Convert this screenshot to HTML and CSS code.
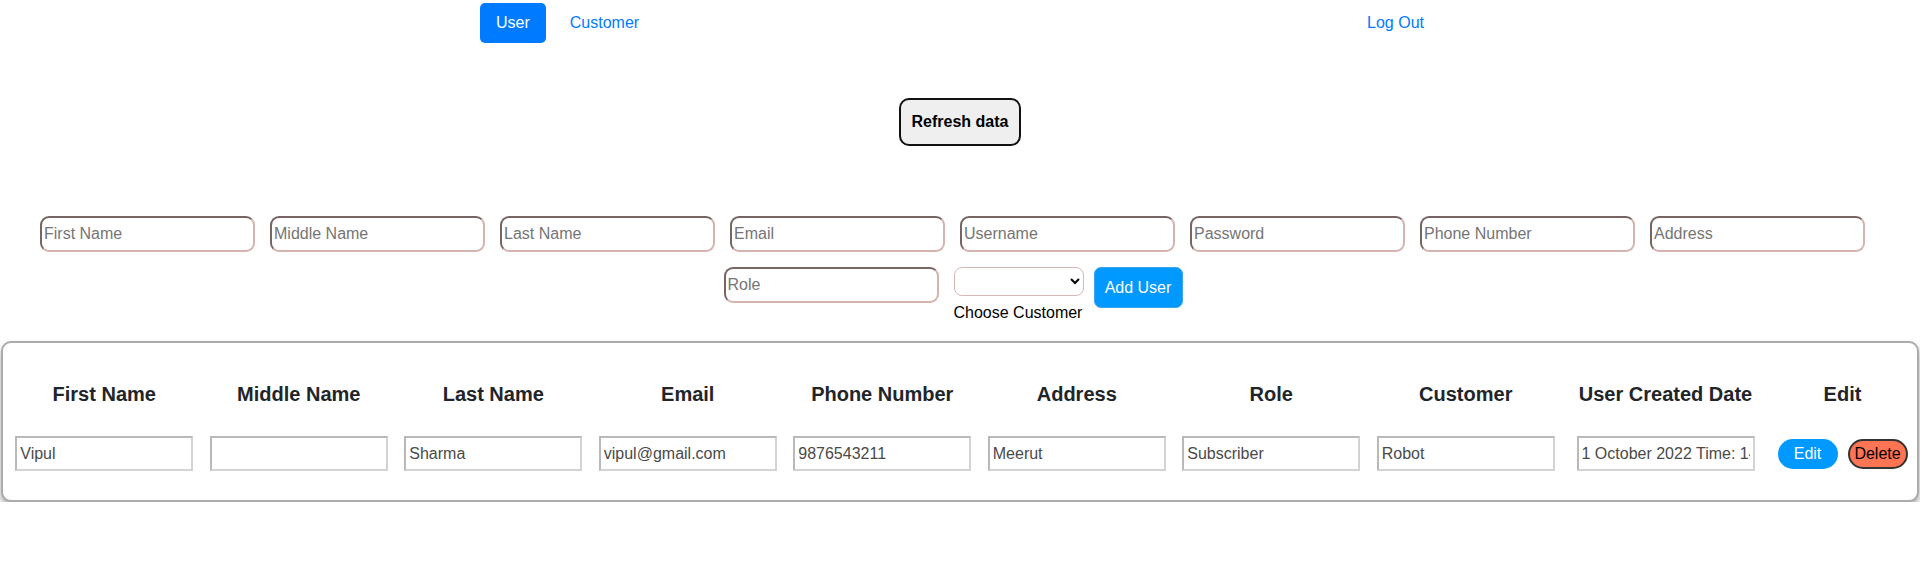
FILE: index.html
```html
<!DOCTYPE html>
<html lang="en">
<head>
<meta charset="utf-8">
<title>Users</title>
<link rel="stylesheet" href="styles.css">
</head>
<body>
<nav class="nav">
  <div class="nav-left">
    <a class="nav-link active" href="#">User</a>
    <a class="nav-link" href="#">Customer</a>
  </div>
  <a class="nav-link" href="#">Log Out</a>
</nav>

<div class="refresh-wrap">
  <button class="refresh">Refresh data</button>
</div>

<form class="user-form">
  <input class="field" placeholder="First Name">
  <input class="field" placeholder="Middle Name">
  <input class="field" placeholder="Last Name">
  <input class="field" placeholder="Email">
  <input class="field" placeholder="Username">
  <input class="field" placeholder="Password">
  <input class="field" placeholder="Phone Number">
  <input class="field" placeholder="Address">
  <input class="field" placeholder="Role">
  <div class="select-group">
    <select class="customer-select"><option></option></select>
    <label class="select-label">Choose Customer</label>
  </div>
  <button type="button" class="add-btn">Add User</button>
</form>

<div class="card">
  <table class="users">
    <colgroup>
      <col class="c-std"><col class="c-std"><col class="c-std"><col class="c-std">
      <col class="c-std"><col class="c-std"><col class="c-std"><col class="c-std">
      <col class="c-date"><col class="c-edit">
    </colgroup>
    <thead>
      <tr>
        <th>First Name</th>
        <th>Middle Name</th>
        <th>Last Name</th>
        <th>Email</th>
        <th>Phone Number</th>
        <th>Address</th>
        <th>Role</th>
        <th>Customer</th>
        <th>User Created Date</th>
        <th>Edit</th>
      </tr>
    </thead>
    <tbody>
      <tr>
        <td><input class="cell-input" value="Vipul" readonly></td>
        <td><input class="cell-input" value="" readonly></td>
        <td><input class="cell-input" value="Sharma" readonly></td>
        <td><input class="cell-input" value="vipul@gmail.com" readonly></td>
        <td><input class="cell-input" value="9876543211" readonly></td>
        <td><input class="cell-input" value="Meerut" readonly></td>
        <td><input class="cell-input" value="Subscriber" readonly></td>
        <td><input class="cell-input" value="Robot" readonly></td>
        <td><input class="cell-input" value="1 October 2022 Time: 14:35:12" readonly></td>
        <td>
          <div class="actions">
            <button class="edit-btn">Edit</button>
            <button class="delete-btn">Delete</button>
          </div>
        </td>
      </tr>
    </tbody>
  </table>
</div>
</body>
</html>
```

FILE: styles.css
```css
* {
  box-sizing: border-box;
}

body {
  margin: 0;
  font-family: "Liberation Sans", Arial, sans-serif;
  font-size: 16px;
  color: #212529;
  background: #fff;
}

/* Navigation */
.nav {
  width: 960px;
  margin: 0 auto;
  padding-top: 3px;
  display: flex;
  justify-content: space-between;
  align-items: flex-start;
}

.nav-left {
  display: flex;
}

.nav-link {
  display: block;
  padding: 8px 16px;
  line-height: 24px;
  font-size: 16px;
  color: #007bff;
  text-decoration: none;
  border-radius: 5px;
}

.nav-left .nav-link {
  margin-right: 8px;
}

.nav-link.active {
  background: #007bff;
  color: #fff;
}

/* Refresh */
.refresh-wrap {
  display: flex;
  justify-content: center;
  margin-top: 55px;
}

.refresh {
  font-family: "Liberation Sans", Arial, sans-serif;
  font-weight: bold;
  font-size: 16px;
  line-height: 18px;
  height: 48px;
  padding: 0 11px;
  background: #efefef;
  color: #000;
  border: 2px solid #111;
  border-radius: 10px;
}

/* Form */
.user-form {
  margin-top: 70px;
  display: flex;
  flex-wrap: wrap;
  justify-content: center;
  align-items: flex-start;
  row-gap: 15px;
}

.field {
  width: 215px;
  height: 36px;
  margin-right: 15px;
  padding: 0 2px;
  font-family: "Liberation Sans", Arial, sans-serif;
  font-size: 16px;
  color: #333;
  background: #fff;
  border: 2px solid;
  border-color: #766563 #d5b3ae #d5b3ae #766563;
  border-radius: 9px;
  outline: none;
}

.field::placeholder {
  color: #757575;
}

.select-group {
  display: flex;
  flex-direction: column;
  width: 130px;
  margin-right: 10px;
}

.customer-select {
  width: 130px;
  height: 29px;
  border: 1px solid #d8b8b5;
  border-radius: 8px;
  background: #fff;
  font-family: "Liberation Sans", Arial, sans-serif;
  font-size: 14px;
  color: #000;
}

.select-label {
  margin-top: 8px;
  font-size: 16px;
  line-height: 18px;
  color: #000;
  white-space: nowrap;
}

.add-btn {
  width: 89px;
  height: 41px;
  margin-right: 14px;
  padding: 0;
  font-family: "Liberation Sans", Arial, sans-serif;
  font-size: 16px;
  color: #fff;
  background: #0099ff;
  border: 1px solid #3aa6ee;
  border-radius: 7px;
}

/* Table card */
.card {
  margin: 19px 1px 0;
  padding: 29px 0 9px 4px;
  border: 2px solid #ababab;
  border-radius: 10px;
  box-shadow: 0 4px 6px rgba(0, 0, 0, 0.35);
  background: #fff;
}

.users {
  width: 100%;
  table-layout: fixed;
  border-collapse: collapse;
  border-spacing: 0;
}

.c-std {
  width: 194.5px;
}

.c-date {
  width: 205px;
}

.c-edit {
  width: 149px;
}

.users th {
  padding: 11px 0;
  font-size: 20px;
  line-height: 23px;
  font-weight: bold;
  text-align: center;
  color: #212529;
  white-space: nowrap;
}

.users td {
  padding: 19px 0 20px;
  text-align: center;
  vertical-align: middle;
}

.cell-input {
  display: block;
  margin: 0 auto;
  width: 178px;
  height: 35px;
  padding: 1px 3px;
  font-family: "Liberation Sans", Arial, sans-serif;
  font-size: 16px;
  color: #4a4a4a;
  background: #fff;
  border: 2px solid;
  border-color: #b9b9b9 #d3d3d3 #d3d3d3 #b9b9b9;
  border-radius: 0;
  outline: none;
}

.actions {
  display: flex;
  justify-content: center;
  gap: 10px;
}

.edit-btn,
.delete-btn {
  width: 60px;
  height: 30px;
  padding: 0;
  font-family: "Liberation Sans", Arial, sans-serif;
  font-size: 16px;
  border-radius: 15px;
}

.edit-btn {
  background: #0099ff;
  color: #fff;
  border: none;
}

.delete-btn {
  background: #ff7452;
  color: #000;
  border: 2px solid #333;
}
```
